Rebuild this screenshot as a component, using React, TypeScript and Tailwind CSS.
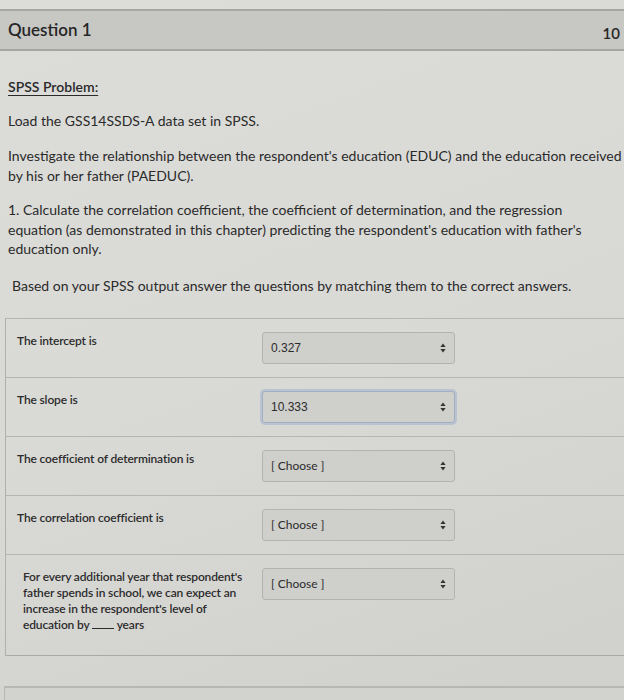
import React from "react";

const Arrows = () => (
  <svg width="6" height="10" viewBox="0 0 6 10" className="shrink-0">
    <path d="M3 0.5 L5.6 4 L0.4 4 Z" fill="#333" />
    <path d="M3 9.5 L5.6 6 L0.4 6 Z" fill="#333" />
  </svg>
);

const Select = ({ value, focus, helv }: { value: string; focus?: boolean; helv?: boolean }) => (
  <div
    className={`w-[193px] h-[32px] rounded-[3px] flex items-center justify-between pl-[8px] pr-[8px] bg-[#cfcfcc] border ${
      focus ? "border-[#9fb0c4] shadow-[0_0_0_2px_rgba(150,170,200,0.45)]" : "border-[#b3b3b0]"
    }`}
  >
    <span
      className={`text-[12px] text-[#2b2b2b] ${helv ? "font-['Liberation_Sans',Arial,sans-serif]" : "font-['Lato',sans-serif]"}`}
    >
      {value}
    </span>
    <Arrows />
  </div>
);

const Row = ({
  label,
  value,
  focus,
  helv,
  tall,
  last,
}: {
  label: React.ReactNode;
  value: string;
  focus?: boolean;
  helv?: boolean;
  tall?: boolean;
  last?: boolean;
}) => (
  <div
    className={`flex border-t border-[#b5b5b2] ${tall ? "h-[102px]" : "h-[59px]"} ${last ? "border-b border-b-[#a9a9a6]" : ""} pl-[11px]`}
  >
    <div className="w-[245px] pt-[14px] text-[12px] leading-[16px] font-semibold tracking-[-0.15px] text-[#2c2c2c]">
      {label}
    </div>
    <div className="pt-[13px]">
      <Select value={value} focus={focus} helv={helv} />
    </div>
  </div>
);

export default function App() {
  return (
    <div className="w-[624px] h-[700px] overflow-hidden bg-[linear-gradient(160deg,#dcdcd9_0%,#d9d9d6_50%,#d0d0cd_100%)] font-['Lato',sans-serif] text-[#2a2a2a]">
      <div className="h-[9px]" />
      <div className="h-[42px] bg-[#c7c7c4] border-t-2 border-b-2 border-[#a6a6a3] flex items-center justify-between pl-[8px] pr-[4px]">
        <span className="text-[17px] font-semibold text-[#262626]">Question 1</span>
        <span className="text-[15px] font-semibold text-[#262626] mt-[6px]">10</span>
      </div>
      <div className="pl-[8px] pt-[26px] text-[14px] leading-[19.5px]">
        <div className="underline underline-offset-[3px] font-semibold text-[14px]">SPSS Problem:</div>
        <div className="mt-[14px]">Load the GSS14SSDS-A data set in SPSS.</div>
        <div className="mt-[16px] whitespace-nowrap">
          Investigate the relationship between the respondent's education (EDUC) and the education received
          <br />
          by his or her father (PAEDUC).
        </div>
        <div className="mt-[15px] whitespace-nowrap">
          1. Calculate the correlation coefficient, the coefficient of determination, and the regression
          <br />
          equation (as demonstrated in this chapter) predicting the respondent's education with father's
          <br />
          education only.
        </div>
        <div className="mt-[17px] pl-[4px] whitespace-nowrap">
          Based on your SPSS output answer the questions by matching them to the correct answers.
        </div>
      </div>
      <div className="mt-[23px] ml-[5px] border-l border-[#b0b0ad]">
        <Row label="The intercept is" value="0.327" helv />
        <Row label="The slope is" value="10.333" helv focus />
        <Row label="The coefficient of determination is" value="[ Choose ]" />
        <Row label="The correlation coefficient is" value="[ Choose ]" />
        <Row
          tall
          last
          label={
            <div className="pl-[6px] whitespace-nowrap">
              For every additional year that respondent's
              <br />
              father spends in school, we can expect an
              <br />
              increase in the respondent's level of
              <br />
              education by <span className="inline-block w-[22px] border-b border-[#2c2c2c] align-baseline" /> years
            </div>
          }
          value="[ Choose ]"
        />
      </div>
      <div className="mt-[30px] h-[20px] ml-[4px] border-t-2 border-l border-[#b7b7b4] bg-[#d2d2cf]" />
    </div>
  );
}
